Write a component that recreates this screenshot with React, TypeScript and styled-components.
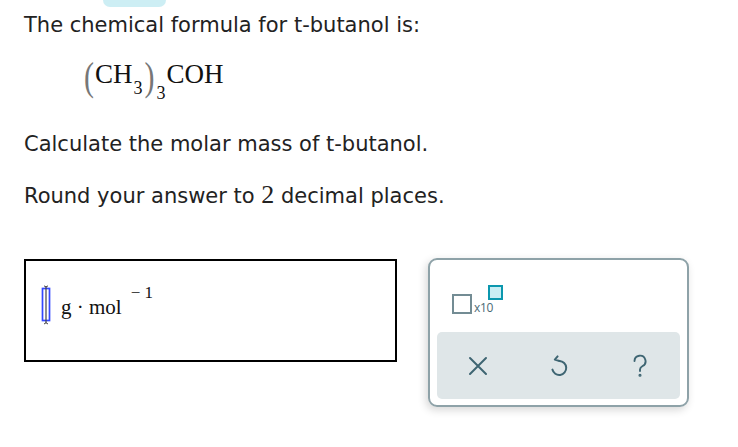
import styled, { createGlobalStyle } from "styled-components";

const GlobalStyle = createGlobalStyle`
  body {
    margin: 0;
    background: #fff;
    font-family: "DejaVu Sans", Verdana, sans-serif;
    color: #222;
  }
`;

const Page = styled.div`
  width: 738px;
  height: 447px;
  box-sizing: border-box;
  padding-left: 24px;
  overflow: hidden;
`;

const TopTab = styled.div`
  margin-left: 79px;
  width: 63px;
  height: 7px;
  border-radius: 0 0 10px 10px;
  background: #cdeef4;
`;

const Para = styled.p<{ $top: number }>`
  margin: ${({ $top }) => $top}px 0 0;
  font-size: 21px;
  line-height: 25px;
`;

const Num = styled.span`
  font-family: "Liberation Serif", "Times New Roman", serif;
  font-size: 26px;
  line-height: 0;
`;

const Formula = styled.div`
  margin-top: 16px;
  padding-left: 59px;
  font-family: "Liberation Serif", "Times New Roman", serif;
  font-size: 27px;
  line-height: 40px;
  height: 42px;
  color: #111;
`;

const Paren = styled.span`
  display: inline-block;
  font-size: 30px;
  line-height: 30px;
  color: #777;
  transform: scaleY(1.3);
  vertical-align: -4px;
  margin: 0 1px;
`;

const Sub = styled.span<{ $drop: number }>`
  font-size: 18px;
  line-height: 0;
  vertical-align: ${({ $drop }) => -$drop}px;
  margin: 0 1px;
`;

const AnswerRow = styled.div`
  display: flex;
  align-items: flex-start;
  gap: 31px;
  margin-top: 50px;
`;

const AnswerBox = styled.div`
  width: 373px;
  height: 103px;
  box-sizing: border-box;
  border: 2px solid #000;
  padding: 24px 0 0 14px;
  display: flex;
  align-items: flex-start;
  gap: 9px;
`;

const Unit = styled.div`
  font-family: "Liberation Serif", "Times New Roman", serif;
  font-size: 21px;
  line-height: 24px;
  padding-top: 8px;
  color: #111;
  white-space: nowrap;
`;

const Sup = styled.span`
  font-size: 17px;
  line-height: 0;
  vertical-align: 16px;
  margin-left: 9px;
`;

const Panel = styled.div`
  width: 261px;
  height: 149px;
  box-sizing: border-box;
  margin-top: -1px;
  border: 2px solid #8ea2a8;
  border-radius: 9px;
  box-shadow: -2px 3px 9px rgba(0, 0, 0, 0.16);
  padding: 0 7px 6px;
  display: flex;
  flex-direction: column;
`;

const TopArea = styled.div`
  height: 72px;
  box-sizing: border-box;
  padding: 34px 0 0 15px;
`;

const PowerButton = styled.div`
  position: relative;
  display: inline-flex;
  align-items: flex-end;
  gap: 2px;
`;

const BaseSquare = styled.span`
  width: 20px;
  height: 20px;
  box-sizing: border-box;
  border: 2px solid #738c94;
  background: #fff;
`;

const PowerLabel = styled.span`
  font-family: "Open Sans", "DejaVu Sans", sans-serif;
  font-size: 12px;
  line-height: 12px;
  color: #4b6a74;
  letter-spacing: -0.3px;
`;

const ExpSquare = styled.span`
  position: absolute;
  left: 36px;
  top: -9px;
  width: 15px;
  height: 15px;
  box-sizing: border-box;
  border: 2px solid #0b97ae;
  background: #c9eef4;
`;

const ToolBar = styled.div`
  height: 67px;
  border-radius: 5px;
  background: #dfe6e8;
  display: flex;
`;

const ToolButton = styled.button`
  flex: 1;
  border: none;
  background: transparent;
  padding: 0;
  display: flex;
  align-items: center;
  justify-content: center;
  color: #3e6572;
`;

const CursorMark = () => (
  <svg width="12" height="40" viewBox="0 0 12 40">
    <rect x="2.5" y="3.5" width="7" height="32" fill="none" stroke="#3347ff" strokeWidth="1.7" />
    <line x1="6" y1="1" x2="6" y2="38" stroke="#444" strokeWidth="1.2" />
    <path d="M4 0.8 L6 2 L8 0.8 M4 39 L6 37.8 L8 39" stroke="#444" strokeWidth="1" fill="none" />
  </svg>
);

const CloseIcon = () => (
  <svg width="20" height="20" viewBox="0 0 20 20" fill="none" stroke="currentColor" strokeWidth="2" strokeLinecap="round">
    <path d="M2 2 L18 18 M18 2 L2 18" />
  </svg>
);

const UndoIcon = () => (
  <svg width="24" height="24" viewBox="0 0 24 24" fill="none" stroke="currentColor" strokeWidth="2" strokeLinecap="round" strokeLinejoin="round">
    <path d="M12.5 7 A7 7 0 1 1 5.4 15.6" />
    <path d="M10.6 2.4 L7.8 5.6 L12.5 7" />
  </svg>
);

const HelpIcon = () => (
  <svg width="20" height="24" viewBox="0 0 20 24" fill="none" stroke="currentColor" strokeWidth="1.9" strokeLinecap="round">
    <path d="M4.5 7 A5.5 5.5 0 1 1 12.6 12 C11 12.9 10 13.8 10 15.6 V17" />
    <circle cx="10" cy="21.3" r="0.6" fill="currentColor" />
  </svg>
);

export default function App() {
  return (
    <>
      <GlobalStyle />
      <Page>
        <TopTab />
        <Para $top={6}>The chemical formula for t-butanol is:</Para>
        <Formula>
          <Paren>(</Paren>CH<Sub $drop={11}>3</Sub>
          <Paren>)</Paren>
          <Sub $drop={16}>3</Sub>COH
        </Formula>
        <Para $top={36}>Calculate the molar mass of t-butanol.</Para>
        <Para $top={27}>
          Round your answer to <Num>2</Num> decimal places.
        </Para>
        <AnswerRow>
          <AnswerBox>
            <CursorMark />
            <Unit>
              g · mol<Sup>− 1</Sup>
            </Unit>
          </AnswerBox>
          <Panel>
            <TopArea>
              <PowerButton>
                <BaseSquare />
                <PowerLabel>x10</PowerLabel>
                <ExpSquare />
              </PowerButton>
            </TopArea>
            <ToolBar>
              <ToolButton aria-label="Clear">
                <CloseIcon />
              </ToolButton>
              <ToolButton aria-label="Undo">
                <UndoIcon />
              </ToolButton>
              <ToolButton aria-label="Help">
                <HelpIcon />
              </ToolButton>
            </ToolBar>
          </Panel>
        </AnswerRow>
      </Page>
    </>
  );
}
